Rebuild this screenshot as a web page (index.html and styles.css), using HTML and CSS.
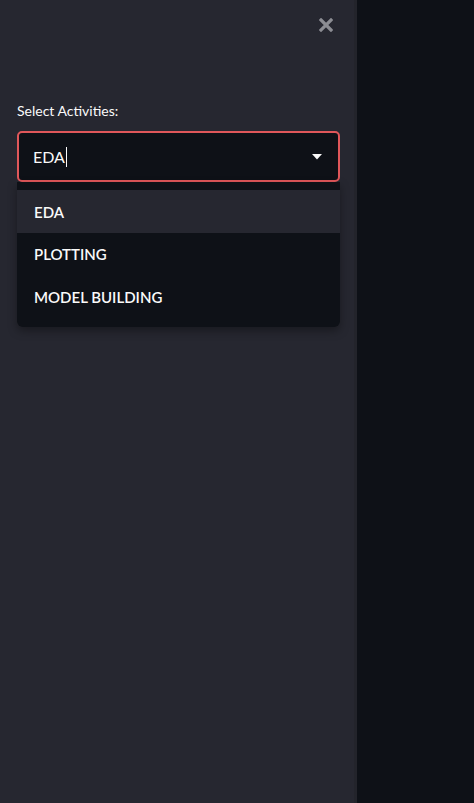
FILE: index.html
```html
<!DOCTYPE html>
<html>
<head>
<meta charset="utf-8">
<link rel="stylesheet" href="styles.css">
</head>
<body>
<div class="app">
  <aside class="sidebar">
    <div class="close-row">
      <svg class="close" width="14" height="14" viewBox="0 0 14 14"><path d="M2 2 L12 12 M12 2 L2 12" stroke="#8c8d93" stroke-width="3.2" stroke-linecap="square"/></svg>
    </div>
    <label class="label">Select Activities:</label>
    <div class="select-wrap">
      <div class="select">
        <span class="value">EDA</span><span class="caret"></span>
        <svg class="arrow" width="10" height="6" viewBox="0 0 10 6"><path d="M0 0 H10 L5 5.5 Z" fill="#fafafa"/></svg>
      </div>
      <ul class="menu">
        <li class="item active">EDA</li>
        <li class="item">PLOTTING</li>
        <li class="item">MODEL BUILDING</li>
      </ul>
    </div>
  </aside>
  <main class="main"></main>
</div>
</body>
</html>
```
FILE: styles.css
```css
html, body {
  margin: 0;
  padding: 0;
  height: 100%;
  background: #0e1117;
  font-family: "Lato", "Liberation Sans", sans-serif;
  color: #fafafa;
}
.app {
  display: flex;
  height: 803px;
}
.sidebar {
  flex: none;
  width: 323px;
  padding: 0 14px 0 17px;
  background: #262730;
  border-right: 3px solid #23242b;
}
.main {
  flex: 1;
  background: #0e1117;
}
.close-row {
  display: flex;
  justify-content: flex-end;
  padding-top: 18px;
  padding-right: 7px;
  height: 15px;
}
.label {
  display: block;
  margin-top: 68px;
  font-size: 14px;
  line-height: 20px;
  color: #fafafa;
}
.select-wrap {
  margin-top: 10px;
}
.select {
  height: 47px;
  border: 2px solid #e0575a;
  border-radius: 5px;
  background: #0e1117;
  display: flex;
  align-items: center;
  padding: 0 16px 0 14px;
}
.value {
  font-size: 16px;
}
.caret {
  width: 1px;
  height: 20px;
  background: #fafafa;
  margin-left: 1px;
}
.arrow {
  margin-left: auto;
}
.menu {
  list-style: none;
  margin: 0;
  padding: 8px 0 9px;
  background: #0e1117;
  border-radius: 0 0 6px 6px;
  box-shadow: 0 4px 10px rgba(0,0,0,0.35);
}
.item {
  height: 42.5px;
  display: flex;
  align-items: center;
  padding-left: 17px;
  font-size: 15px;
  font-weight: 600;
  padding-top: 1px;
  box-sizing: border-box;
}
.item.active {
  background: #262730;
}
```
